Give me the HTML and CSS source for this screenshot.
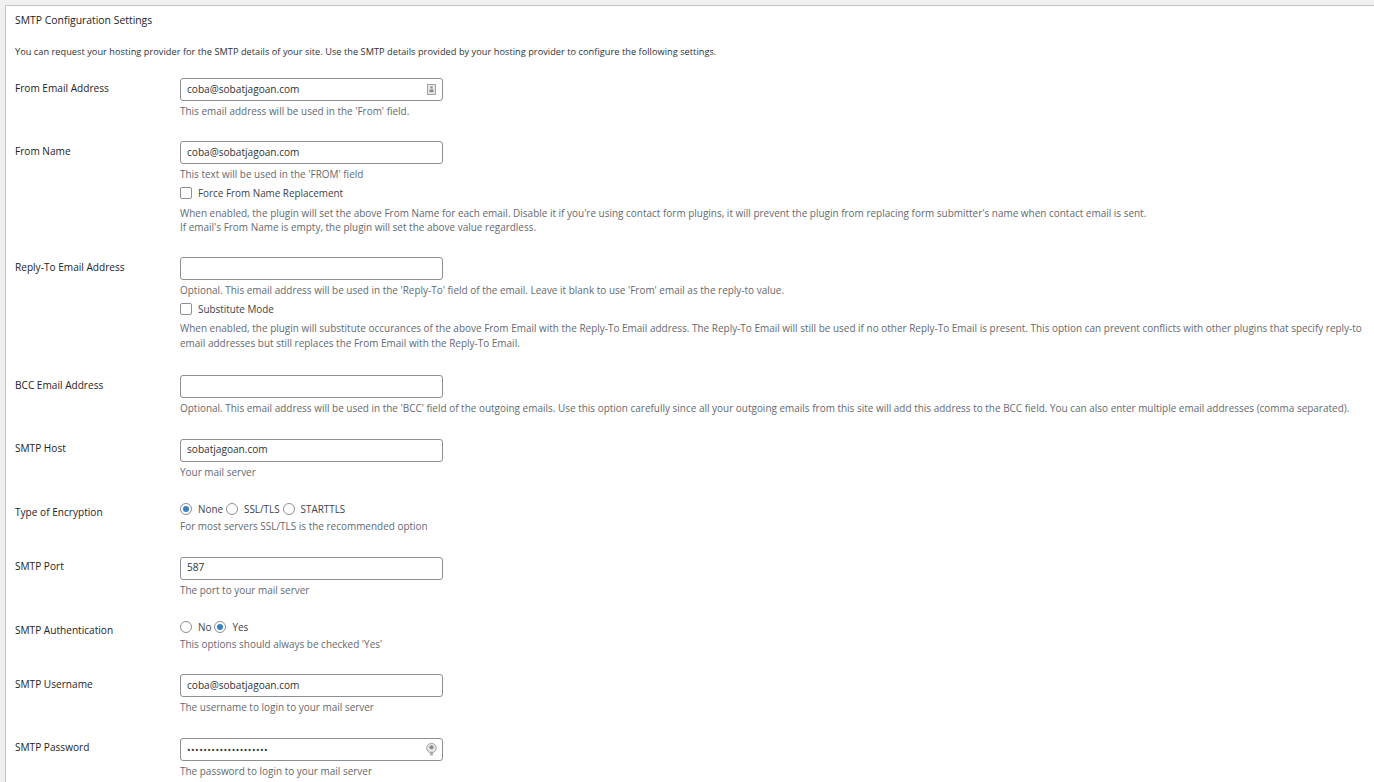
FILE: index.html
```html
<!DOCTYPE html>
<html lang="en">
<head>
<meta charset="utf-8">
<title>SMTP Configuration Settings</title>
<link rel="stylesheet" href="styles.css">
</head>
<body>
<main class="panel">
  <h3 class="title">SMTP Configuration Settings</h3>
  <p class="intro">You can request your hosting provider for the SMTP details of your site. Use the SMTP details provided by your hosting provider to configure the following settings.</p>

  <div class="row">
    <label class="label">From Email Address</label>
    <div class="field">
      <div class="input-wrap">
        <input class="input" type="text" value="coba@sobatjagoan.com">
        <svg class="input-icon" viewBox="0 0 10 12" aria-hidden="true"><rect x="0.5" y="0.5" width="9" height="11" fill="#e8e8e8" stroke="#9a9a9a"/><rect x="3.8" y="2.5" width="2.4" height="2.4" fill="#8a8a8a"/><rect x="2.8" y="6" width="4.4" height="3" fill="#8a8a8a"/></svg>
      </div>
      <p class="desc">This email address will be used in the 'From' field.</p>
    </div>
  </div>

  <div class="row">
    <label class="label">From Name</label>
    <div class="field">
      <input class="input" type="text" value="coba@sobatjagoan.com">
      <p class="desc">This text will be used in the 'FROM' field</p>
      <div class="check"><span class="box"></span><span>Force From Name Replacement</span></div>
      <p class="note">When enabled, the plugin will set the above From Name for each email. Disable it if you're using contact form plugins, it will prevent the plugin from replacing form submitter's name when contact email is sent.<br>If email's From Name is empty, the plugin will set the above value regardless.</p>
    </div>
  </div>

  <div class="row row-tall">
    <label class="label">Reply-To Email Address</label>
    <div class="field">
      <input class="input" type="text" value="">
      <p class="desc">Optional. This email address will be used in the 'Reply-To' field of the email. Leave it blank to use 'From' email as the reply-to value.</p>
      <div class="check"><span class="box"></span><span>Substitute Mode</span></div>
      <p class="note">When enabled, the plugin will substitute occurances of the above From Email with the Reply-To Email address. The Reply-To Email will still be used if no other Reply-To Email is present. This option can prevent conflicts with other plugins that specify reply-to email addresses but still replaces the From Email with the Reply-To Email.</p>
    </div>
  </div>

  <div class="row">
    <label class="label">BCC Email Address</label>
    <div class="field">
      <input class="input" type="text" value="">
      <p class="desc">Optional. This email address will be used in the 'BCC' field of the outgoing emails. Use this option carefully since all your outgoing emails from this site will add this address to the BCC field. You can also enter multiple email addresses (comma separated).</p>
    </div>
  </div>

  <div class="row">
    <label class="label">SMTP Host</label>
    <div class="field">
      <input class="input" type="text" value="sobatjagoan.com">
      <p class="desc">Your mail server</p>
    </div>
  </div>

  <div class="row">
    <label class="label">Type of Encryption</label>
    <div class="field">
      <div class="radios">
        <span class="radio on"></span><span class="radio-text">None</span>
        <span class="radio"></span><span class="radio-text">SSL/TLS</span>
        <span class="radio"></span><span class="radio-text">STARTTLS</span>
      </div>
      <p class="desc">For most servers SSL/TLS is the recommended option</p>
    </div>
  </div>

  <div class="row">
    <label class="label">SMTP Port</label>
    <div class="field">
      <input class="input" type="text" value="587">
      <p class="desc">The port to your mail server</p>
    </div>
  </div>

  <div class="row">
    <label class="label">SMTP Authentication</label>
    <div class="field">
      <div class="radios">
        <span class="radio"></span><span class="radio-text">No</span>
        <span class="radio on"></span><span class="radio-text">Yes</span>
      </div>
      <p class="desc">This options should always be checked 'Yes'</p>
    </div>
  </div>

  <div class="row">
    <label class="label">SMTP Username</label>
    <div class="field">
      <input class="input" type="text" value="coba@sobatjagoan.com">
      <p class="desc">The username to login to your mail server</p>
    </div>
  </div>

  <div class="row">
    <label class="label">SMTP Password</label>
    <div class="field">
      <div class="input-wrap">
        <input class="input pass" type="text" value="••••••••••••••••••••">
        <svg class="input-icon input-icon-key" viewBox="0 0 12 15" aria-hidden="true"><circle cx="6" cy="6.5" r="5.2" fill="#e4e4e4" stroke="#a0a0a0"/><circle cx="6" cy="5.5" r="2.2" fill="#8a8a8a"/><rect x="4.5" y="10.5" width="3" height="4" fill="#a8a8a8"/></svg>
      </div>
      <p class="desc">The password to login to your mail server</p>
    </div>
  </div>
</main>
</body>
</html>
```

FILE: styles.css
```css
* {
  box-sizing: border-box;
}

html,
body {
  height: 782px;
  overflow: hidden;
}

body {
  margin: 0;
  padding: 5px 0 0 5px;
  background: #f0f0f1;
  font-family: "Open Sans", "Noto Sans", sans-serif;
  font-size: 10.1px;
  color: #2c3338;
}

.panel {
  background: #fff;
  border: 1px solid #c3c4c7;
  border-right: 0;
  padding: 7px 0 0 9px;
  min-height: 900px;
}

.title {
  margin: 0;
  font-size: 10.4px;
  line-height: 15px;
  font-weight: 400;
  color: #1d2327;
}

.intro {
  margin: 16px 0 0;
  font-size: 9.2px;
  letter-spacing: 0.04px;
  line-height: 15px;
  color: #2c3338;
}

.row {
  display: grid;
  grid-template-columns: 165px 1fr;
  padding: 11px 0;
}

.row:first-of-type {
  margin-top: 8px;
}

.row-tall {
  padding-bottom: 13.8px;
}

.label {
  padding-top: 2.6px;
  line-height: 14px;
  color: #1d2327;
}

.field {
  padding-right: 6px;
  min-width: 0;
}

.input-wrap {
  position: relative;
  width: 263px;
}

.input {
  display: block;
  width: 263px;
  height: 23px;
  margin: 0;
  padding: 0 6px 2px;
  border: 1px solid #8c8f94;
  border-radius: 3px;
  background: #fff;
  font: inherit;
  color: #2c3338;
  outline: none;
}

.pass {
  font-size: 9.6px;
  letter-spacing: 0.45px;
  padding-bottom: 0;
}

.input-icon {
  position: absolute;
  top: 6px;
  right: 7px;
  width: 9px;
  height: 11px;
}

.input-icon-key {
  top: 4px;
  right: 6px;
  width: 11px;
  height: 14px;
}

.desc {
  margin: 0;
  padding-top: 3px;
  font-size: 9.95px;
  letter-spacing: 0.012px;
  line-height: 15.4px;
  color: #646970;
}

.note {
  margin: 2px 0 0;
  font-size: 9.95px;
  letter-spacing: 0.012px;
  line-height: 14.6px;
  color: #646970;
}

.check {
  display: flex;
  align-items: center;
  gap: 6px;
  height: 21px;
  font-size: 9.9px;
  color: #3c434a;
}

.box {
  width: 12px;
  height: 12px;
  border: 1px solid #8c8f94;
  border-radius: 2px;
  background: #fff;
}

.radios {
  display: flex;
  align-items: center;
  height: 14px;
  font-size: 9.9px;
  color: #3c434a;
}

.radio {
  flex: none;
  position: relative;
  width: 12px;
  height: 12px;
  border: 1px solid #8c8f94;
  border-radius: 50%;
  background: #fff;
}

.radio.on::before {
  content: "";
  position: absolute;
  inset: 2px;
  border-radius: 50%;
  background: #3582c4;
}

.radio-text {
  margin: 0 3px 0 6px;
}
```
